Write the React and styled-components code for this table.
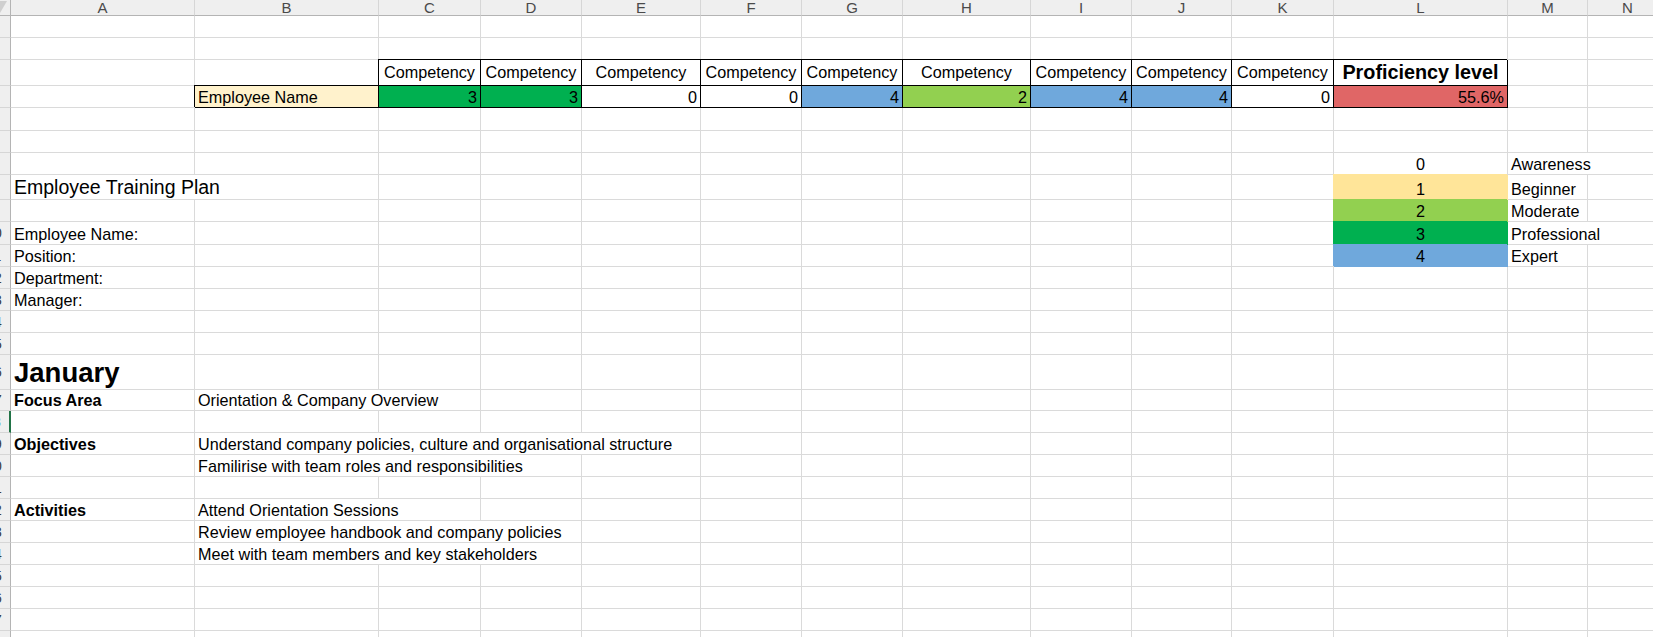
import React from "react";
import styled, { createGlobalStyle } from "styled-components";

const GREEN = "#00b050";
const LIME = "#92d050";
const BLUE = "#6fa8dc";
const RED = "#e06666";
const CREAM = "#fff2cc";
const GOLD = "#ffe599";
const GRID = "#dadada";

const LETTERS = "ABCDEFGHIJKLMN".split("");
const WIDTHS = [184, 184, 102, 101, 119, 101, 101, 128, 101, 100, 102, 174, 80, 80];

const competencyHeads = "CDEFGHIJK".split("").reduce((acc, c) => {
    acc[c] = { text: "Competency", align: "center", boxed: true };
    return acc;
}, {});

const score = (text, fill) => ({ text, align: "right", fill, boxed: true });

const ROWS = [
    { n: 1, h: 22 },
    { n: 2, h: 22 },
    {
        n: 3,
        h: 26,
        valign: "center",
        cells: {
            ...competencyHeads,
            L: { text: "Proficiency level", align: "center", bold: true, size: 19.8, boxed: true },
        },
    },
    {
        n: 4,
        h: 22,
        cells: {
            B: { text: "Employee Name", fill: CREAM, boxed: true },
            C: score("3", GREEN),
            D: score("3", GREEN),
            E: score("0"),
            F: score("0"),
            G: score("4", BLUE),
            H: score("2", LIME),
            I: score("4", BLUE),
            J: score("4", BLUE),
            K: score("0"),
            L: score("55.6%", RED),
        },
    },
    { n: 5, h: 23 },
    { n: 6, h: 22 },
    {
        n: 7,
        h: 22,
        cells: {
            L: { text: "0", align: "center" },
            M: { text: "Awareness", span: 2 },
        },
    },
    {
        n: 8,
        h: 25,
        cells: {
            A: { text: "Employee Training Plan", size: 19.5, span: 2 },
            L: { text: "1", align: "center", fill: GOLD },
            M: { text: "Beginner" },
        },
    },
    {
        n: 9,
        h: 22,
        cells: {
            L: { text: "2", align: "center", fill: LIME },
            M: { text: "Moderate" },
        },
    },
    {
        n: 10,
        h: 23,
        cells: {
            A: { text: "Employee Name:" },
            L: { text: "3", align: "center", fill: GREEN },
            M: { text: "Professional", span: 2 },
        },
    },
    {
        n: 11,
        h: 22,
        cells: {
            A: { text: "Position:" },
            L: { text: "4", align: "center", fill: BLUE },
            M: { text: "Expert" },
        },
    },
    { n: 12, h: 22, cells: { A: { text: "Department:" } } },
    { n: 13, h: 22, cells: { A: { text: "Manager:" } } },
    { n: 14, h: 22 },
    { n: 15, h: 22 },
    { n: 16, h: 35, cells: { A: { text: "January", bold: true, size: 27.5 } } },
    {
        n: 17,
        h: 21,
        cells: {
            A: { text: "Focus Area", bold: true },
            B: { text: "Orientation & Company Overview", span: 2 },
        },
    },
    { n: 18, h: 22, active: true },
    {
        n: 19,
        h: 22,
        cells: {
            A: { text: "Objectives", bold: true },
            B: { text: "Understand company policies, culture and organisational structure", span: 4 },
        },
    },
    {
        n: 20,
        h: 22,
        cells: { B: { text: "Familirise with team roles and responsibilities", span: 3 } },
    },
    { n: 21, h: 22 },
    {
        n: 22,
        h: 22,
        cells: {
            A: { text: "Activities", bold: true },
            B: { text: "Attend Orientation Sessions", span: 2 },
        },
    },
    {
        n: 23,
        h: 22,
        cells: { B: { text: "Review employee handbook and company policies", span: 3 } },
    },
    {
        n: 24,
        h: 22,
        cells: { B: { text: "Meet with team members and key stakeholders", span: 3 } },
    },
    { n: 25, h: 22 },
    { n: 26, h: 22 },
    { n: 27, h: 22 },
    { n: 28, h: 22 },
];

const GlobalStyle = createGlobalStyle`
    html, body {
        margin: 0;
        padding: 0;
        background: #fff;
        overflow: hidden;
    }
`;

const Sheet = styled.div`
    display: grid;
    grid-template-columns: 11px ${WIDTHS.map((w) => `${w}px`).join(" ")};
    grid-template-rows: 16px ${ROWS.map((r) => `${r.h}px`).join(" ")};
    width: 1653px;
    height: 637px;
    overflow: hidden;
    font-family: "Liberation Sans", Arial, sans-serif;
    font-size: 16.2px;
    color: #000;
    background: #fff;
`;

const Corner = styled.div`
    box-sizing: border-box;
    background: #efefef;
    border-right: 1px solid #b4b4b4;
    border-bottom: 1px solid #b4b4b4;
    overflow: hidden;

    svg {
        display: block;
    }
`;

const ColHead = styled.div`
    box-sizing: border-box;
    display: flex;
    align-items: center;
    justify-content: center;
    background: #efefef;
    border-right: 1px solid #d6d6d6;
    border-bottom: 1px solid #b4b4b4;
    font-size: 15px;
    line-height: 1;
    color: #4a4a4a;
    overflow: hidden;
`;

const RowHead = styled.div`
    box-sizing: border-box;
    display: flex;
    align-items: center;
    justify-content: flex-end;
    background: #efefef;
    border-right: ${(p) => (p.$active ? "2px solid #217346" : "1px solid #b4b4b4")};
    border-bottom: 1px solid #d6d6d6;
    font-size: 14px;
    color: ${(p) => (p.$active ? "#217346" : "#3a3a3a")};
    white-space: nowrap;
    overflow: hidden;
`;

const RowNumber = styled.span`
    flex: 0 0 32px;
    text-align: center;
`;

const Cell = styled.div`
    box-sizing: border-box;
    grid-column: span ${(p) => p.$span};
    display: flex;
    align-items: ${(p) => (p.$valign === "center" ? "center" : "flex-end")};
    justify-content: ${(p) =>
        p.$align === "right" ? "flex-end" : p.$align === "center" ? "center" : "flex-start"};
    padding: 0 3px;
    background: ${(p) => p.$fill || "transparent"};
    border-right: 1px solid ${(p) => (p.$boxed ? "#000" : p.$fill || GRID)};
    border-bottom: 1px solid ${(p) => (p.$boxed ? "#000" : p.$fill || GRID)};
    box-shadow: ${(p) =>
        p.$boxed ? "-1px -1px 0 0 #000" : p.$fill ? `-1px -1px 0 0 ${p.$fill}` : "none"};
    font-size: ${(p) => (p.$size ? `${p.$size}px` : "inherit")};
    font-weight: ${(p) => (p.$bold ? 700 : 400)};
    white-space: nowrap;
    overflow: hidden;
`;

const renderRow = (row) => {
    const out = [
        <RowHead key={`h${row.n}`} $active={row.active}>
            <RowNumber>{row.n}</RowNumber>
        </RowHead>,
    ];
    const cells = row.cells || {};
    let i = 0;
    while (i < LETTERS.length) {
        const letter = LETTERS[i];
        const c = cells[letter];
        const span = (c && c.span) || 1;
        out.push(
            <Cell
                key={`${letter}${row.n}`}
                $span={span}
                $valign={row.valign}
                $align={c && c.align}
                $fill={c && c.fill}
                $boxed={c && c.boxed}
                $bold={c && c.bold}
                $size={c && c.size}
            >
                {c ? c.text : null}
            </Cell>
        );
        i += span;
    }
    return out;
};

const App = () => {
    return (
        <>
            <GlobalStyle />
            <Sheet>
                <Corner>
                    <svg width="11" height="16" viewBox="0 0 11 16">
                        <polygon points="0,1 7,1 0,13" fill="#cfcfcf" />
                    </svg>
                </Corner>
                {LETTERS.map((l) => (
                    <ColHead key={l}>{l}</ColHead>
                ))}
                {ROWS.map(renderRow)}
            </Sheet>
        </>
    );
};

export default App;
